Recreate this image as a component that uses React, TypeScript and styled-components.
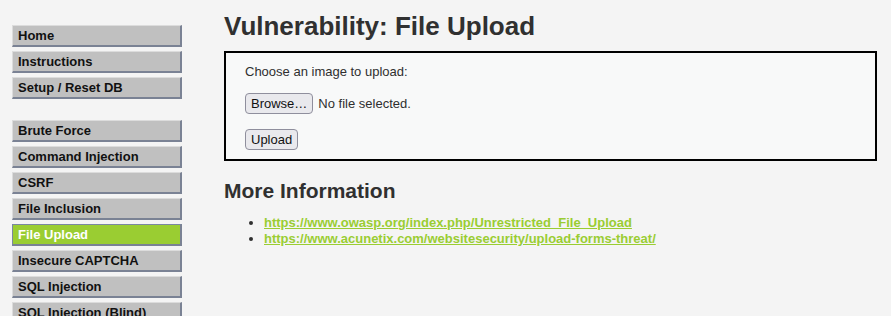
import React from 'react';
import styled, { createGlobalStyle } from 'styled-components';

const GlobalStyle = createGlobalStyle`
  html, body {
    margin: 0;
    padding: 0;
    background: #f4f4f4;
    font-family: "Liberation Sans", Arial, sans-serif;
    color: #2f2f2f;
  }
`;

const Page = styled.div`
  display: flex;
  flex-direction: row;
  align-items: flex-start;
  padding-left: 12px;
  height: 316px;
  overflow: hidden;
`;

const Menu = styled.div`
  width: 170px;
  display: flex;
  flex-direction: column;
  padding-top: 25px;
`;

const MenuGroup = styled.ul`
  list-style: none;
  margin: 0 0 21px 0;
  padding: 0;
  display: flex;
  flex-direction: column;
  gap: 4px;
`;

const MenuItem = styled.li<{ $active?: boolean }>`
  box-sizing: border-box;
  height: 22px;
  line-height: 20px;
  padding-left: 5px;
  font-size: 13px;
  font-weight: bold;
  color: ${(p) => (p.$active ? '#ffffff' : '#111')};
  background: ${(p) => (p.$active ? '#9acd32' : '#c0c0c0')};
  border-top: 1px solid ${(p) => (p.$active ? '#7a87a0' : '#dcdcdc')};
  border-left: 1px solid ${(p) => (p.$active ? '#7a87a0' : '#dcdcdc')};
  border-right: 2px solid #7a8294;
  border-bottom: 2px solid #7a8294;
  white-space: nowrap;
  overflow: hidden;
`;

const Main = styled.div`
  margin-left: 42px;
  width: 653px;
`;

const Title = styled.h1`
  margin: 10px 0 9px 0;
  font-size: 26px;
  line-height: 32px;
  font-weight: bold;
  color: #303030;
`;

const Box = styled.div`
  box-sizing: border-box;
  border: 2px solid #000;
  background: #f8f9f9;
  padding: 11px 20px 10px 19px;
  font-size: 13px;
  height: 110px;
`;

const Line = styled.div<{ $gap?: number }>`
  line-height: 16px;
  margin-bottom: ${(p) => p.$gap ?? 13}px;
  display: flex;
  align-items: center;
  gap: 5px;
`;

const Button = styled.button`
  font-family: "Liberation Sans", Arial, sans-serif;
  font-size: 13px;
  color: #111;
  background: #e9e9ed;
  border: 1px solid #8f8f9d;
  border-radius: 4px;
  padding: 0 5px;
  height: 21px;
  line-height: 19px;
`;

const SubTitle = styled.h2`
  margin: 17px 0 11px 0;
  font-size: 21px;
  line-height: 26px;
  font-weight: bold;
  color: #303030;
`;

const Links = styled.ul`
  margin: 0;
  padding-left: 40px;
  font-size: 13px;
  line-height: 16px;
`;

const Link = styled.a`
  color: #9acd32;
  font-weight: bold;
  text-decoration: underline;
`;

const topItems = ['Home', 'Instructions', 'Setup / Reset DB'];
const vulnItems = [
  'Brute Force',
  'Command Injection',
  'CSRF',
  'File Inclusion',
  'File Upload',
  'Insecure CAPTCHA',
  'SQL Injection',
  'SQL Injection (Blind)',
];

const links = [
  'https://www.owasp.org/index.php/Unrestricted_File_Upload',
  'https://www.acunetix.com/websitesecurity/upload-forms-threat/',
];

export default function App() {
  return (
    <>
      <GlobalStyle />
      <Page>
        <Menu>
          <MenuGroup>
            {topItems.map((item) => (
              <MenuItem key={item}>{item}</MenuItem>
            ))}
          </MenuGroup>
          <MenuGroup>
            {vulnItems.map((item) => (
              <MenuItem key={item} $active={item === 'File Upload'}>
                {item}
              </MenuItem>
            ))}
          </MenuGroup>
        </Menu>
        <Main>
          <Title>Vulnerability: File Upload</Title>
          <Box>
            <Line>Choose an image to upload:</Line>
            <Line $gap={15}>
              <Button>Browse…</Button>
              <span>No file selected.</span>
            </Line>
            <Line>
              <Button>Upload</Button>
            </Line>
          </Box>
          <SubTitle>More Information</SubTitle>
          <Links>
            {links.map((l) => (
              <li key={l}>
                <Link href="#">{l}</Link>
              </li>
            ))}
          </Links>
        </Main>
      </Page>
    </>
  );
}
